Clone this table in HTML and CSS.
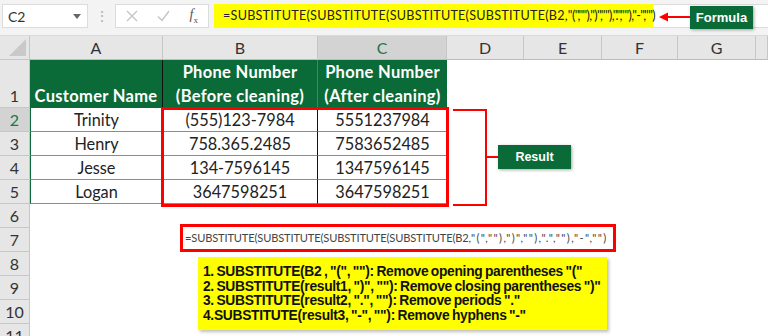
FILE: index.html
```html
<!DOCTYPE html>
<html>
<head>
<meta charset="utf-8">
<link rel="stylesheet" href="styles.css">
</head>
<body>
<div class="app">
  <div class="toolbar">
    <div class="namebox"><span>C2</span><svg class="caret" width="8" height="5" viewBox="0 0 8 5"><path d="M0 0h8L4 5z" fill="#666"/></svg></div>
    <div class="dots">⋮</div>
    <div class="fxbox">
      <svg width="12" height="12" viewBox="0 0 12 12"><path d="M1 1l10 10M11 1L1 11" stroke="#c4c4c4" stroke-width="1.4"/></svg>
      <svg width="13" height="12" viewBox="0 0 13 12"><path d="M1 6.5l4 4L12 1" stroke="#c4c4c4" stroke-width="1.4" fill="none"/></svg>
      <span class="fx"><i>f</i><sub>x</sub></span>
    </div>
    <div class="formulabar"><span class="ftext">=SUBSTITUTE(SUBSTITUTE(SUBSTITUTE(SUBSTITUTE(B2,<span class="q">"(",""),")",""),".",""),"-","")</span></span></div>
  </div>
  <div class="sheet">
    <div class="corner"><svg width="20" height="20" viewBox="0 0 20 20"><path d="M19 2V19H2z" fill="#c9c9c9"/></svg></div>
    <div class="ch">A</div><div class="ch">B</div><div class="ch sel">C</div><div class="ch">D</div><div class="ch">E</div><div class="ch">F</div><div class="ch">G</div><div class="ch"></div>

    <div class="rh r1">1</div>
    <div class="hd hdA">Customer Name</div>
    <div class="hd hdB">Phone Number<br>(Before cleaning)</div>
    <div class="hd hdC">Phone Number<br>(After cleaning)</div>
    <div class="c"></div><div class="c"></div><div class="c"></div><div class="c"></div><div class="c"></div>

    <div class="rh sel">2</div>
    <div class="d dA">Trinity</div><div class="d dB">(555)123-7984</div><div class="d dC">5551237984</div>
    <div class="c"></div><div class="c"></div><div class="c"></div><div class="c"></div><div class="c"></div>

    <div class="rh">3</div>
    <div class="d dA">Henry</div><div class="d dB">758.365.2485</div><div class="d dC">7583652485</div>
    <div class="c"></div><div class="c"></div><div class="c"></div><div class="c"></div><div class="c"></div>

    <div class="rh">4</div>
    <div class="d dA">Jesse</div><div class="d dB">134-7596145</div><div class="d dC">1347596145</div>
    <div class="c"></div><div class="c"></div><div class="c"></div><div class="c"></div><div class="c"></div>

    <div class="rh">5</div>
    <div class="d dA">Logan</div><div class="d dB">3647598251</div><div class="d dC">3647598251</div>
    <div class="c"></div><div class="c"></div><div class="c"></div><div class="c"></div><div class="c"></div>

    <div class="rh">6</div><div class="c span8"></div>
    <div class="rh">7</div><div class="c span8"></div>
    <div class="rh">8</div><div class="c span8"></div>
    <div class="rh">9</div><div class="c span8"></div>
    <div class="rh">10</div><div class="c span8"></div>
    <div class="rh">11</div><div class="c span8"></div>
  </div>

  <div class="redbox"></div>
  <div class="bracket"></div>
  <div class="tick"></div>
  <div class="label result">Result</div>

  <svg class="arrow" width="32" height="10" viewBox="0 0 32 10"><path d="M6 5H32" stroke="#f00" stroke-width="2"/><path d="M0 5L9 0.5V9.5z" fill="#f00"/></svg>
  <div class="label formula">Formula</div>

  <div class="fbox">=SUBSTITUTE(SUBSTITUTE(SUBSTITUTE(SUBSTITUTE(B2,<span class="q2">"(",""),")",""),".",""),"-","")</span></div>
  <div class="note">
    <div>1. SUBSTITUTE(B2 , "(", ""): Remove opening parentheses "("</div>
    <div>2. SUBSTITUTE(result1, ")", ""): Remove closing parentheses ")"</div>
    <div>3. SUBSTITUTE(result2, ".", ""): Remove periods "."</div>
    <div>4.SUBSTITUTE(result3, "-", ""): Remove hyphens "-"</div>
  </div>
</div>
</body>
</html>
```

FILE: styles.css
```css
* { box-sizing: border-box; }
html, body { margin: 0; padding: 0; background: #fff; }
body { width: 768px; height: 336px; overflow: hidden; font-family: Lato, "Liberation Sans", sans-serif; }
.app { position: relative; width: 768px; height: 336px; }

.toolbar {
  height: 36px;
  background: #f3f3f3;
  display: flex;
  align-items: flex-start;
  padding: 4px 0 0 2px;
  border-bottom: 1px solid #dadada;
}
.namebox {
  width: 86px; height: 24px; background: #fff; border: 1px solid #dcdcdc;
  display: flex; align-items: center; justify-content: space-between;
  padding: 0 6px 0 5px; font-size: 14px; color: #333;
}
.dots { width: 27px; text-align: center; color: #b0b0b0; font-size: 14px; line-height: 24px; }
.fxbox {
  width: 94px; height: 24px; background: #fff; border: 1px solid #dcdcdc;
  display: flex; align-items: center; justify-content: space-between;
  padding: 0 10px 0 10px;
}
.fx { font-family: "Liberation Serif", serif; font-size: 14px; color: #555; }
.fx sub { font-size: 9px; }
.formulabar {
  flex: 1; height: 24px; margin-left: 5px; background: #fff;
  border: 1px solid #dcdcdc; border-right: none; position: relative;
}
.ftext {
  display: block; width: 439px; height: 24px; margin: -1px 0 0 -1px;
  background: #ffff00; font-size: 12.6px; line-height: 24px; padding-left: 9px;
  color: #222; white-space: nowrap; letter-spacing: 0.25px;
}
.ftext .q { letter-spacing: -0.6px; }

.sheet {
  display: grid;
  grid-template-columns: 30px 133px 155px 129px 77px 78px 76px 78px 12px;
  grid-template-rows: 24px 48px repeat(10, 24px);
}
.corner { background: #e6e6e6; border-right: 1px solid #c6c6c6; border-bottom: 1px solid #c6c6c6; display: flex; align-items: flex-end; justify-content: flex-end; padding: 0 2px 2px 0; }
.ch {
  background: #e6e6e6; border-right: 1px solid #c6c6c6; border-bottom: 1px solid #bcbcbc;
  text-align: center; font-size: 16px; line-height: 23px; color: #333;
}
.ch.sel { background: #d3d3d3; color: #217346; }
.rh {
  background: #e6e6e6; border-right: 1px solid #c6c6c6; border-bottom: 1px solid #c6c6c6;
  text-align: center; font-size: 16px; line-height: 23px; color: #333;
}
.rh.r1 { display: flex; align-items: flex-end; justify-content: center; }
.rh.sel { background: #d3d3d3; color: #217346; }
.c { background: #fff; }
.span8 { grid-column: span 8; }

.hd {
  background: #0b6b38; color: #fff; font-weight: bold; font-size: 16.5px;
  line-height: 24px; text-align: center; letter-spacing: 0.3px;
  display: flex; align-items: flex-end; justify-content: center;
  padding-bottom: 0;
}
.hdA { border-right: 1px solid #111; }
.hdB { border-right: 1px solid #3d8a5e; }
.d {
  text-align: center; font-size: 16.3px; line-height: 23px; color: #222;
  border-bottom: 1px solid #8c8c8c;
}
.dA { border-right: 1px solid #111; border-left: 1px solid #0b6b38; }
.dB { border-right: 1px solid #111; }

.redbox { position: absolute; left: 161px; top: 107px; width: 288px; height: 100px; border: 3px solid #ff0000; }
.bracket { position: absolute; left: 453px; top: 109px; width: 34px; height: 97px; border: 2px solid #ff0000; border-left: none; }
.tick { position: absolute; left: 486px; top: 156px; width: 12px; height: 2px; background: #ff0000; }

.label {
  position: absolute; background: #0b6b38; color: #fff;
  font-family: "Liberation Sans", Arial, sans-serif; font-weight: bold;
  text-align: center; box-shadow: 1px 1px 3px rgba(0,0,0,0.35);
}
.result { left: 498px; top: 145px; width: 73px; height: 24px; font-size: 12.5px; line-height: 24px; }
.formula { left: 690px; top: 6px; width: 63px; height: 23px; font-size: 13px; line-height: 23px; }
.arrow { position: absolute; left: 659px; top: 12px; }

.fbox {
  position: absolute; left: 180px; top: 224px; width: 436px; height: 28px;
  border: 3px solid #ff0000; background: #fff;
  font-size: 11.1px; line-height: 22px; color: #444; padding-left: 2px; white-space: nowrap;
  letter-spacing: -0.15px;
}
.fbox .q2 { letter-spacing: 1.4px; }
.note {
  position: absolute; left: 198px; top: 257px; width: 409px; height: 73px;
  background: #ffff00; box-shadow: 2px 2px 3px rgba(0,0,0,0.25);
  font-family: "Liberation Sans", Arial, sans-serif; font-weight: bold; font-size: 13.8px;
  line-height: 14.7px; color: #111; padding: 8px 0 0 5px; white-space: nowrap;
  letter-spacing: -0.3px; word-spacing: -1px;
}
```
